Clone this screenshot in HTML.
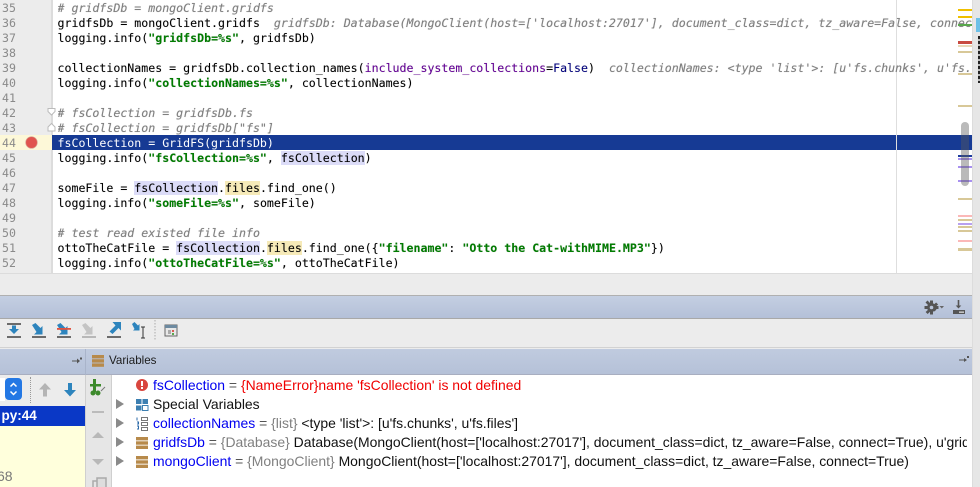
<!DOCTYPE html>
<html><head><meta charset="utf-8">
<style>
html,body{margin:0;padding:0;background:#ececec}
#r{position:relative;width:980px;height:487px;overflow:hidden;background:#ececec;font-family:"Liberation Sans",sans-serif}
#r>div,#r>svg{position:absolute}
.ln{left:2px;width:44px;margin-top:1px;font:11.6px/15px "DejaVu Sans Mono",monospace;color:#8a8a8a;height:15px}
.c{left:57.5px;width:914px;margin-top:1px;overflow:hidden;white-space:pre;font:11.6px/15px "DejaVu Sans Mono",monospace;color:#000;height:15px;text-shadow:0 0 .6px rgba(0,0,0,.35)}
.k{color:#808080;font-style:italic}
.s{color:#007c00;font-weight:bold}
.p{color:#660099}
.n{color:#000080}
.a{background:#dcdcf8}
.f{background:#f6eab8}
.m{left:958px;width:14px;height:2px}
.v{left:153px;white-space:pre;font-size:13.95px;line-height:19px;height:19px;color:#111}
.b{color:#0000f0}.g{color:#808080}.e{color:#f00000}.q{color:#555}
</style></head><body><div id="r">
<div style="left:0;top:0;width:52px;height:273px;background:#ececec"></div>
<div style="left:51px;top:0;width:2px;height:273px;background:#dcdcdc"></div>
<div style="left:53px;top:0;width:919px;height:273px;background:#fff"></div>
<div style="left:0;top:135px;width:52px;height:15px;background:#fdf8d8"></div>
<div style="left:52px;top:135px;width:920px;height:15px;background:#163a94"></div>
<div style="left:896px;top:0;width:1px;height:273px;background:#dedede"></div>
<div style="left:0;top:273px;width:972px;height:1px;background:#dcdcdc"></div>

<div class="ln" style="top:0">35</div><div class="ln" style="top:15px">36</div><div class="ln" style="top:30px">37</div><div class="ln" style="top:45px">38</div><div class="ln" style="top:60px">39</div><div class="ln" style="top:75px">40</div><div class="ln" style="top:90px">41</div><div class="ln" style="top:105px">42</div><div class="ln" style="top:120px">43</div><div class="ln" style="top:135px">44</div><div class="ln" style="top:150px">45</div><div class="ln" style="top:165px">46</div><div class="ln" style="top:180px">47</div><div class="ln" style="top:195px">48</div><div class="ln" style="top:210px">49</div><div class="ln" style="top:225px">50</div><div class="ln" style="top:240px">51</div><div class="ln" style="top:255px">52</div>

<div class="c k" style="top:0"># gridfsDb = mongoClient.gridfs</div>
<div class="c" style="top:15px">gridfsDb = mongoClient.gridfs  <span class="k">gridfsDb: Database(MongoClient(host=['localhost:27017'], document_class=dict, tz_aware=False, connect=True), u'gridfs')</span></div>
<div class="c" style="top:30px">logging.info(<span class="s">"gridfsDb=%s"</span>, gridfsDb)</div>
<div class="c" style="top:60px">collectionNames = gridfsDb.collection_names(<span class="p">include_system_collections</span>=<span class="n">False</span>)  <span class="k">collectionNames: &lt;type 'list'&gt;: [u'fs.chunks', u'fs.files']</span></div>
<div class="c" style="top:75px">logging.info(<span class="s">"collectionNames=%s"</span>, collectionNames)</div>
<div class="c k" style="top:105px"># fsCollection = gridfsDb.fs</div>
<div class="c k" style="top:120px"># fsCollection = gridfsDb["fs"]</div>
<div class="c" style="top:135px;color:#fff;text-shadow:none">fsCollection = GridFS(gridfsDb)</div>
<div class="c" style="top:150px">logging.info(<span class="s">"fsCollection=%s"</span>, <span class="a">fsCollection</span>)</div>
<div class="c" style="top:180px">someFile = <span class="a">fsCollection</span>.<span class="f">files</span>.find_one()</div>
<div class="c" style="top:195px">logging.info(<span class="s">"someFile=%s"</span>, someFile)</div>
<div class="c k" style="top:225px"># test read existed file info</div>
<div class="c" style="top:240px">ottoTheCatFile = <span class="a">fsCollection</span>.<span class="f">files</span>.find_one({<span class="s">"filename"</span>: <span class="s">"Otto the Cat-withMIME.MP3"</span>})</div>
<div class="c" style="top:255px">logging.info(<span class="s">"ottoTheCatFile=%s"</span>, ottoTheCatFile)</div>

<svg style="left:25px;top:136px" width="13" height="13"><circle cx="6.5" cy="6.5" r="5.8" fill="#e0544e" stroke="#d8a090" stroke-width=".7"/></svg>
<svg style="left:47px;top:107px" width="9" height="27"><path d="M1 1.5h7v3l-3.5 3.5l-3.5-3.5z" fill="#fff" stroke="#bbb"/><path d="M4.500 16.500l3.500 3.500v4h-7v-4z" fill="#fff" stroke="#bbb"/></svg>

<div class="m" style="top:9px;background:#f0c000"></div>
<div class="m" style="top:16px;background:#f0c000"></div>
<div class="m" style="top:24px;background:#58a84c"></div>
<div class="m" style="top:41px;height:3px;background:#c84a40"></div>
<div class="m" style="top:45px;background:#e8d8b8"></div>
<div class="m" style="top:51px;background:#d8c898"></div>
<div class="m" style="top:73px;background:#d8c898"></div>
<div class="m" style="top:105px;background:#d8c898"></div>
<div class="m" style="top:198px;background:#d8c898"></div>
<div class="m" style="top:215px;background:#fbb8b8"></div>
<div class="m" style="top:219px;background:#d8c898"></div>
<div class="m" style="top:223px;background:#b8a0f0"></div>
<div class="m" style="top:226px;background:#d8c898"></div>
<div class="m" style="top:230px;background:#d8c898"></div>
<div class="m" style="top:240px;background:#fbb8b8"></div>
<div class="m" style="top:248px;height:3px;background:#d8c898"></div>
<div class="m" style="top:155px;background:#1c3c9c"></div>
<div class="m" style="top:158px;background:#a890f0"></div>
<div class="m" style="top:166px;background:#a890f0"></div>
<div class="m" style="top:180px;background:#a890f0"></div>
<div style="left:961px;top:122px;width:8px;height:64px;border-radius:4px;background:rgba(90,90,90,.42)"></div>

<div style="left:972px;top:0;width:8px;height:487px;background:#e6e6e6;border-left:1px solid #dcdcdc;box-sizing:border-box"></div>
<div style="left:976px;top:18px;width:4px;height:14px;background:#6cc0e8"></div>
<div style="left:978px;top:36px;width:2px;height:47px;background:repeating-linear-gradient(#222 0 3px,#bbb 3px 5px)"></div>

<div style="left:0;top:295px;width:972px;height:24px;background:linear-gradient(#c4cfe2,#b4c0d8);border-top:1px solid #b0b0b0;border-bottom:1px solid #a8a8a8;box-sizing:border-box"></div>
<svg style="left:924px;top:299px" width="44" height="18"><g fill="#555"><circle cx="7.500" cy="8.500" r="4.500"/><path d="M6 1.500h3v14h-3zM.5 7h14v3h-14z"/><path d="M2.200 3.200l2-2 9 9-2 2zM12.800 3.200l2 2-10.500 9.500-2-2z" transform="translate(-.7 .3)"/><path d="M15.500 7h4.500l-2.200 2.500z" fill="#666"/><path d="M33.700 1h1.600v5.500h2l-2.800 3-2.800-3h2z"/><path d="M29 11h12v4H29z"/></g><circle cx="7.500" cy="8.500" r="1.800" fill="#b8c4da"/><rect x="35" y="12.500" width="5" height="1.300" fill="#ddd"/></svg>

<div style="left:0;top:319px;width:972px;height:29px;background:#ececec;border-bottom:1px solid #d2d2d2;box-sizing:border-box"></div>
<svg style="left:0;top:319px" width="190" height="28">
<g fill="#6b6b6b"><rect x="7" y="4" width="14" height="2"/><rect x="7" y="17" width="14" height="2"/><rect x="32" y="17" width="14" height="2"/><rect x="57" y="17" width="14" height="2"/><rect x="82" y="17" width="14" height="2" fill="#b8b8b8"/><rect x="107" y="17" width="14" height="2"/></g>
<g fill="#2d84bd"><path d="M12 6.500h4v3.500h3l-5 5-5-5h3z"/><path d="M32 6l3.500-2 5 5 2-2v8.500h-8.500l2.500-2.500z"/><path d="M57 6l3.500-2 5 5 2-2v8.500h-8.500l2.500-2.500z"/><path d="M121 3v8.500l-2.500-2.500-6 6-3-2.500 6-6-3-3.500z"/><path d="M132 5l2.500-2 3.500 3.500 1.500-1.500v6.500h-6.500l1.500-1.500z"/></g>
<rect x="57" y="9" width="14" height="1.800" fill="#e0523f"/>
<path d="M82 6l3.500-2 5 5 2-2v8.500h-8.500l2.500-2.500z" fill="#c4c4c4"/>
<path d="M141 8h4M141 19h4M143 8v11" stroke="#333" stroke-width="1" fill="none"/>
<path d="M155 1v21" stroke="#aaa" stroke-dasharray="1.500 1.500"/>
<rect x="165" y="6" width="12" height="11" fill="#e8e8e8" stroke="#666"/><rect x="165" y="6" width="12" height="3" fill="#6d8aa0"/><path d="M168 11h3v4h-3z" fill="#aaa"/><path d="M172 11h2v2h-2z" fill="#d85a50"/><path d="M172 14h2v2h-2z" fill="#58a84c"/>
</svg>

<div style="left:0;top:349px;width:972px;height:26px;background:linear-gradient(#c0cbdf,#b5c1d8);border-bottom:1px solid #a8aec0;box-sizing:border-box"></div>
<div style="left:85px;top:349px;width:1px;height:26px;background:#a9b4ca"></div>
<svg style="left:70px;top:354px" width="36" height="16"><path d="M2 7h7" stroke="#555" stroke-width="1"/><path d="M7 4.500l3 2.500-3 2.500z" fill="#555"/><rect x="10" y="3.500" width="2" height="2" fill="#555"/><g fill="#b78a4b"><rect x="22" y="1" width="12" height="3.400"/><rect x="22" y="5.200" width="12" height="3.400"/><rect x="22" y="9.400" width="12" height="3.400"/></g></svg>
<div style="left:109px;top:354px;font-size:11.6px;line-height:14px;color:#1c1c1c">Variables</div>
<svg style="left:958px;top:355px" width="12" height="10"><path d="M1 5h6" stroke="#555"/><path d="M6 3l3 2-3 2z" fill="#555"/><rect x="9" y="1" width="2" height="2" fill="#555"/></svg>

<div style="left:0;top:375px;width:85px;height:31px;background:#ececec"></div>
<div style="left:0;top:378px;width:5px;height:23px;background:#fff"></div>
<div style="left:5px;top:378px;width:17px;height:22px;border-radius:4px;background:#2478e4"></div>
<svg style="left:7px;top:380px" width="13" height="18"><path d="M3.500 6.500l3-3 3 3M3.500 11.500l3 3 3-3" fill="none" stroke="#fff" stroke-width="1.500"/></svg>
<div style="left:30px;top:377px;width:1px;height:26px;border-left:1px dotted #999"></div>
<svg style="left:38px;top:382px" width="40" height="16"><path d="M7 1l6 6.500h-4v7h-4v-7h-4z" fill="#b4b4b4"/><path d="M30 1h4v7h4l-6 6.500-6-6.500h4z" fill="#2d84bd"/></svg>
<div style="left:0;top:406px;width:85px;height:20px;background:#0a38c6"></div>
<div style="left:1.5px;top:408px;font-size:13.5px;line-height:16px;font-weight:bold;color:#fff">py:44</div>
<div style="left:0;top:426px;width:85px;height:61px;background:#ffffdc"></div>
<div style="left:-3px;top:468px;font-size:14px;line-height:16px;color:#777">68</div>

<div style="left:85px;top:375px;width:27px;height:112px;background:#e6e6e6;border-left:1px solid #cfcfcf;border-right:1px solid #cfcfcf;box-sizing:border-box"></div>
<svg style="left:88px;top:378px" width="22" height="109">
<path d="M5 1h3v5h5v2.500H8V14H5V8.500H2V6h3z" fill="#3d8a2c"/><circle cx="5" cy="15" r="2.500" fill="#3d8a2c"/><circle cx="10" cy="15" r="2.500" fill="#3d8a2c"/><path d="M13 13l4-4" stroke="#777"/>
<rect x="4" y="33" width="12" height="2" fill="#bbb"/>
<path d="M10 54l6 6H4z" fill="#b8b8b8"/><path d="M4 81h12l-6 6z" fill="#b8b8b8"/>
<rect x="5" y="103" width="9" height="10" fill="none" stroke="#aaa" stroke-width="1.500"/><rect x="9" y="100" width="9" height="10" fill="#ddd" stroke="#aaa" stroke-width="1.500"/>
</svg>

<div style="left:112px;top:375px;width:860px;height:112px;background:#fff"></div>

<svg style="left:112px;top:375px" width="50" height="112">
<circle cx="30" cy="10" r="6" fill="#d9463e"/><rect x="29" y="6" width="2" height="5" fill="#fff"/><rect x="29" y="12" width="2" height="2" fill="#fff"/>
<g fill="#8a8a8a"><path d="M4 24l8 5-8 5z"/><path d="M4 43l8 5-8 5z"/><path d="M4 62l8 5-8 5z"/><path d="M4 81l8 5-8 5z"/></g>
<rect x="24" y="24" width="5.500" height="5" fill="#3c7fb1"/><rect x="30.500" y="24" width="5.500" height="5" fill="#3c7fb1"/><rect x="24" y="30.500" width="5.500" height="5" fill="#3c7fb1"/><rect x="30.500" y="30.500" width="5.500" height="5" fill="none" stroke="#3c7fb1"/>
<path d="M25 42.500v3M25 47h1.500v2h-1.500M25 51h1.500v3h-1.500" stroke="#2b6aa8" fill="none"/>
<g fill="none" stroke="#777"><rect x="29.500" y="42.500" width="6" height="3"/><rect x="29.500" y="47.500" width="6" height="3"/><rect x="29.500" y="52.500" width="6" height="3"/></g>
<g fill="#b78a4b"><rect x="24" y="62" width="12" height="3.400"/><rect x="24" y="66.300" width="12" height="3.400"/><rect x="24" y="70.600" width="12" height="3.400"/><rect x="24" y="81" width="12" height="3.400"/><rect x="24" y="85.300" width="12" height="3.400"/><rect x="24" y="89.600" width="12" height="3.400"/></g>
</svg>

<div class="v" style="top:375.5px"><span class="b">fsCollection</span><span class="q"> = </span><span class="e">{NameError}name 'fsCollection' is not defined</span></div>
<div class="v" style="top:394.5px">Special Variables</div>
<div class="v" style="top:413.5px"><span class="b">collectionNames</span><span class="q"> = </span><span class="g">{list}</span> &lt;type 'list'&gt;: [u'fs.chunks', u'fs.files']</div>
<div class="v" style="top:432.5px;width:814px;overflow:hidden"><span class="b">gridfsDb</span><span class="q"> = </span><span class="g">{Database}</span> Database(MongoClient(host=['localhost:27017'], document_class=dict, tz_aware=False, connect=True), u'gridfs')</div>
<div class="v" style="top:451.5px"><span class="b">mongoClient</span><span class="q"> = </span><span class="g">{MongoClient}</span> MongoClient(host=['localhost:27017'], document_class=dict, tz_aware=False, connect=True)</div>
</div></body></html>
